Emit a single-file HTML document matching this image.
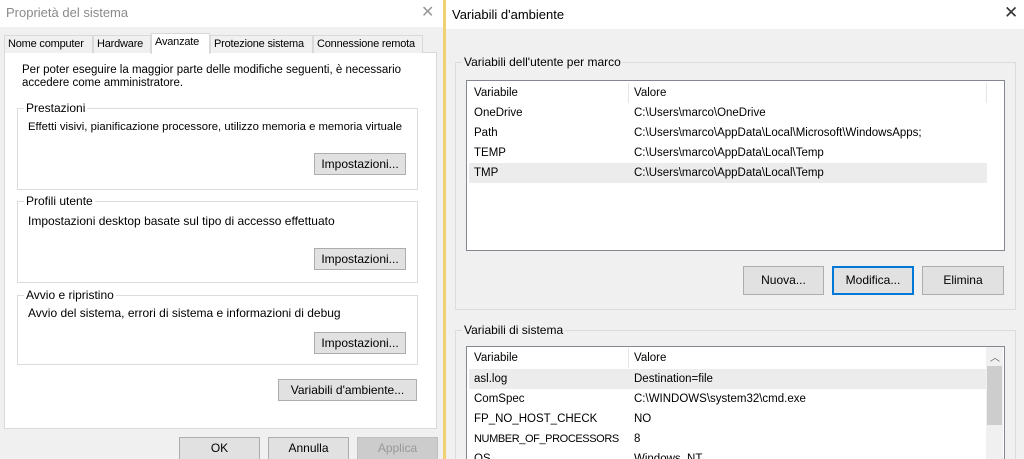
<!DOCTYPE html>
<html><head><meta charset="utf-8"><style>
*{margin:0;padding:0;box-sizing:border-box}
html{overflow:hidden;width:1024px;height:459px}
body{width:1024px;height:459px;overflow:hidden;background:#f0f0f0;font-family:"Liberation Sans",sans-serif;font-size:12px;color:#000;position:relative}
.a{position:absolute;white-space:nowrap}
.btn{position:absolute;background:#e1e1e1;border:1px solid #adadad;text-align:center;line-height:20px;white-space:nowrap}
.gb{position:absolute;border:1px solid #dcdcdc}
.gl{position:absolute;background:#fff;padding:0 2px;top:-8px;left:6px;white-space:nowrap}
.tab{position:absolute;top:35px;height:18px;border:1px solid #d9d9d9;border-bottom:none;background:#f0f0f0;line-height:16px;padding-left:3px;white-space:nowrap;font-size:11px;letter-spacing:-0.2px;overflow:hidden}
.row{position:absolute;left:469px;width:518px;height:20px;line-height:20px;font-size:11.5px}
.row span{position:absolute;left:5px;white-space:nowrap}
.row span+span{left:165px}
</style></head><body>
<div class="a" style="left:0;top:0;width:443px;height:27px;background:#fff"></div>
<div class="a" style="left:6px;top:5px;font-size:13px;color:#8a8a8a">Proprietà del sistema</div>
<div class="a" style="left:421px;top:2px;font-size:16px;color:#999">✕</div>
<div class="a" style="left:4px;top:52px;width:433px;height:377px;background:#fff;border:1px solid #d9d9d9"></div>
<div class="tab" style="left:4px;width:89px">Nome computer</div>
<div class="tab" style="left:93px;width:58px">Hardware</div>
<div class="tab" style="left:151px;top:33px;height:21px;width:59px;background:#fff">Avanzate</div>
<div class="tab" style="left:210px;width:103px">Protezione sistema</div>
<div class="tab" style="left:313px;width:110px">Connessione remota</div>
<div class="a" style="left:22px;top:64px;line-height:13px;font-size:11.5px">Per poter eseguire la maggior parte delle modifiche seguenti, è necessario<br>accedere come amministratore.</div>
<div class="gb" style="left:17px;top:108px;width:401px;height:82px"><div class="gl">Prestazioni</div></div>
<div class="a" style="left:28px;top:121px;font-size:11.3px">Effetti visivi, pianificazione processore, utilizzo memoria e memoria virtuale</div>
<div class="btn" style="left:314px;top:153px;width:92px;height:22px">Impostazioni...</div>
<div class="gb" style="left:17px;top:201px;width:401px;height:82px"><div class="gl">Profili utente</div></div>
<div class="a" style="left:28px;top:214px">Impostazioni desktop basate sul tipo di accesso effettuato</div>
<div class="btn" style="left:314px;top:248px;width:92px;height:22px">Impostazioni...</div>
<div class="gb" style="left:17px;top:295px;width:401px;height:70px"><div class="gl">Avvio e ripristino</div></div>
<div class="a" style="left:28px;top:306px">Avvio del sistema, errori di sistema e informazioni di debug</div>
<div class="btn" style="left:314px;top:332px;width:92px;height:22px">Impostazioni...</div>
<div class="btn" style="left:278px;top:379px;width:139px;height:22px">Variabili d'ambiente...</div>
<div class="btn" style="left:179px;top:437px;width:81px;height:22px;border-bottom:none">OK</div>
<div class="btn" style="left:268px;top:437px;width:81px;height:22px;border-bottom:none">Annulla</div>
<div class="btn" style="left:357px;top:437px;width:81px;height:22px;border-bottom:none;color:#999;background:#ccc;border-color:#bfbfbf">Applica</div>
<div class="a" style="left:443px;top:0;width:3px;height:459px;background:#f0d070"></div>
<div class="a" style="left:446px;top:0;width:578px;height:29px;background:#fff"></div>
<div class="a" style="left:452px;top:7px;font-size:13px">Variabili d'ambiente</div>
<div class="a" style="left:1004px;top:3px;font-size:17px;color:#333">✕</div>
<div class="gb" style="left:455px;top:62px;width:561px;height:248px"><div class="gl" style="background:#f0f0f0">Variabili dell'utente per marco</div></div>
<div class="a" style="left:466px;top:80px;width:539px;height:171px;background:#fff;border:1px solid #828790"></div>
<div class="a" style="left:628px;top:83px;width:1px;height:20px;background:#e5e5e5"></div>
<div class="a" style="left:986px;top:83px;width:1px;height:20px;background:#e5e5e5"></div>
<div class="row" style="top:83px"><span>Variabile</span><span>Valore</span></div>
<div class="row" style="top:103px"><span>OneDrive</span><span>C:\Users\marco\OneDrive</span></div>
<div class="row" style="top:123px"><span>Path</span><span>C:\Users\marco\AppData\Local\Microsoft\WindowsApps;</span></div>
<div class="row" style="top:143px"><span>TEMP</span><span>C:\Users\marco\AppData\Local\Temp</span></div>
<div class="row" style="top:163px;background:#ececec"><span>TMP</span><span>C:\Users\marco\AppData\Local\Temp</span></div>
<div class="btn" style="left:743px;top:266px;width:81px;height:29px;line-height:27px">Nuova...</div>
<div class="btn" style="left:832px;top:266px;width:82px;height:29px;line-height:25px;border:2px solid #0078d7">Modifica...</div>
<div class="btn" style="left:922px;top:266px;width:82px;height:29px;line-height:27px">Elimina</div>
<div class="gb" style="left:455px;top:330px;width:561px;height:140px"><div class="gl" style="background:#f0f0f0">Variabili di sistema</div></div>
<div class="a" style="left:466px;top:346px;width:539px;height:120px;background:#fff;border:1px solid #828790"></div>
<div class="a" style="left:628px;top:348px;width:1px;height:20px;background:#e5e5e5"></div>
<div class="row" style="top:348px"><span>Variabile</span><span>Valore</span></div>
<div class="row" style="top:369px;background:#ececec"><span>asl.log</span><span>Destination=file</span></div>
<div class="row" style="top:389px"><span>ComSpec</span><span>C:\WINDOWS\system32\cmd.exe</span></div>
<div class="row" style="top:409px"><span>FP_NO_HOST_CHECK</span><span>NO</span></div>
<div class="row" style="top:429px"><span style="letter-spacing:-0.4px;font-size:11px">NUMBER_OF_PROCESSORS</span><span>8</span></div>
<div class="row" style="top:449px"><span>OS</span><span>Windows_NT</span></div>
<div class="a" style="left:986px;top:347px;width:17px;height:112px;background:#f0f0f0"></div>
<div class="a" style="left:990px;top:349px;font-size:10px;color:#606060">︿</div>
<div class="a" style="left:987px;top:366px;width:15px;height:59px;background:#cdcdcd"></div>
</body></html>
